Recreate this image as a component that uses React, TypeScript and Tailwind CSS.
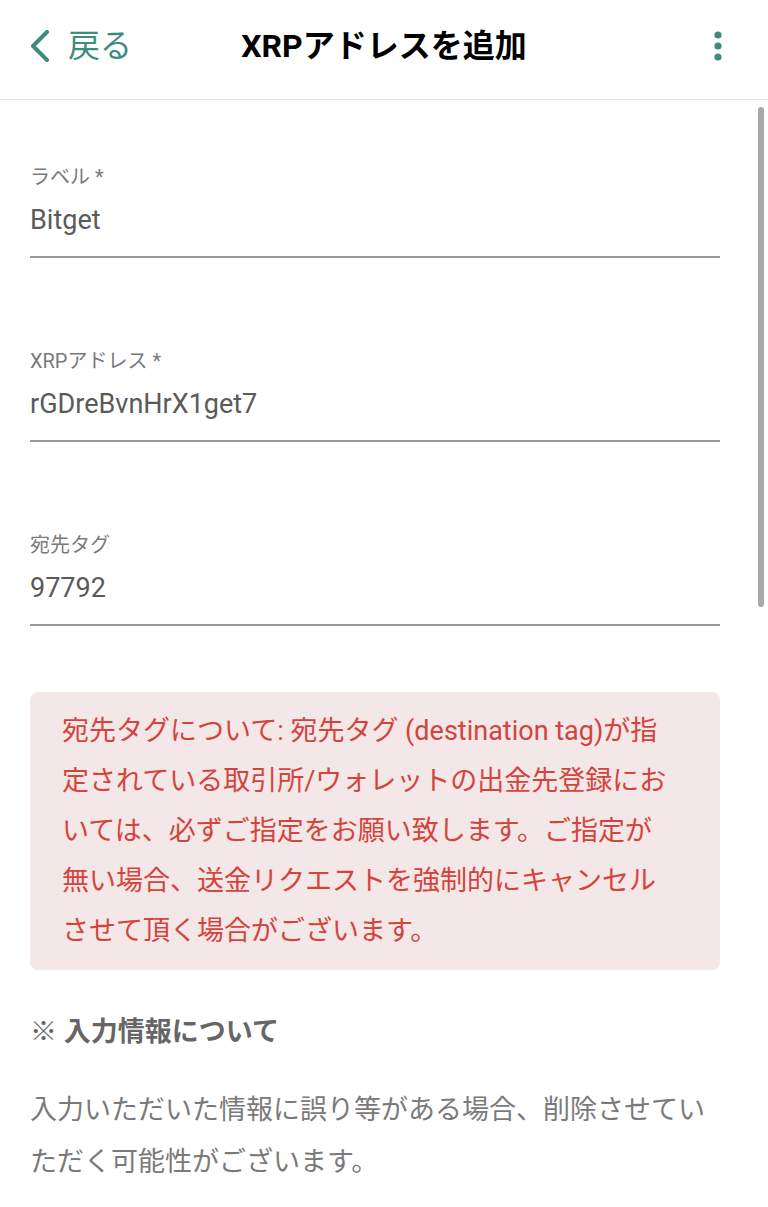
const fields = [
  { label: "ラベル *", value: "Bitget" },
  { label: "XRPアドレス *", value: "rGDreBvnHrX1get7" },
  { label: "宛先タグ", value: "97792" },
];

function Field({ label, value, first }: { label: string; value: string; first?: boolean }) {
  return (
    <div className={`${first ? "mt-[65px]" : "mt-[91px]"} border-b-2 border-[#9a9a9a] pb-[18px]`}>
      <div className="text-[20px] leading-[24px] text-[#7a7a7a]">{label}</div>
      <div className="mt-[13px] text-[27px] leading-[36px] text-[#5a5a5a]">{value}</div>
    </div>
  );
}

export default function App() {
  return (
    <div className="relative min-h-screen bg-white font-['Roboto','Noto_Sans_CJK_JP',sans-serif]">
      <header className="relative flex h-[100px] items-center border-b border-[#e6e6e6] px-[30px] pb-[8px]">
        <button className="flex items-center gap-[18px] text-[#3f8c7e]">
          <svg width="20" height="32" viewBox="0 0 20 32" fill="none" aria-hidden>
            <polyline points="17,2 3,16 17,30" stroke="#3f8c7e" strokeWidth="4" strokeLinecap="round" strokeLinejoin="round" />
          </svg>
          <span className="text-[32px] leading-none">戻る</span>
        </button>
        <h1 className="absolute left-1/2 -translate-x-1/2 text-[32px] font-bold leading-none text-black">
          XRPアドレスを追加
        </h1>
        <svg className="ml-auto mr-[16px]" width="8" height="30" viewBox="0 0 8 30" aria-hidden>
          <circle cx="4" cy="4" r="3.6" fill="#3f8c7e" />
          <circle cx="4" cy="15" r="3.6" fill="#3f8c7e" />
          <circle cx="4" cy="26" r="3.6" fill="#3f8c7e" />
        </svg>
      </header>

      <main className="pl-[30px] pr-[48px] pb-[20px]">
        {fields.map((f, i) => (
          <Field key={f.label} label={f.label} value={f.value} first={i === 0} />
        ))}

        <div className="mt-[66px] rounded-[8px] bg-[#f3e7e7] py-[14px] pl-[32px] pr-[20px]">
          <p className="whitespace-nowrap text-[27px] leading-[50px] text-[#d4443c]">
            宛先タグについて: 宛先タグ (destination tag)が指
            <br />
            定されている取引所/ウォレットの出金先登録にお
            <br />
            いては、必ずご指定をお願い致します。ご指定が
            <br />
            無い場合、送金リクエストを強制的にキャンセル
            <br />
            させて頂く場合がございます。
          </p>
        </div>

        <h2 className="mt-[44px] text-[27px] font-bold leading-[36px] text-[#666666]">※ 入力情報について</h2>
        <p className="mt-[34px] text-[27px] leading-[52px] text-[#7a7a7a]">
          入力いただいた情報に誤り等がある場合、削除させていただく可能性がございます。
        </p>
      </main>

      <div className="absolute right-[4px] top-[107px] h-[500px] w-[6px] rounded-full bg-[#a8a8a8]" />
    </div>
  );
}
